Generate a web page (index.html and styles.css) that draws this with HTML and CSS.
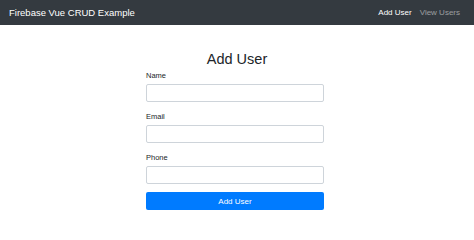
FILE: index.html
```html
<!DOCTYPE html>
<html>
<head>
<meta charset="utf-8">
<link rel="stylesheet" href="styles.css">
</head>
<body>
<nav class="navbar">
  <span class="brand">Firebase Vue CRUD Example</span>
  <div class="nav-links">
    <a class="nav-link active">Add User</a>
    <a class="nav-link">View Users</a>
  </div>
</nav>
<main class="page">
  <h1 class="title">Add User</h1>
  <form class="form">
    <div class="group">
      <label class="label">Name</label>
      <input class="input" type="text">
    </div>
    <div class="group">
      <label class="label">Email</label>
      <input class="input" type="text">
    </div>
    <div class="group">
      <label class="label">Phone</label>
      <input class="input" type="text">
    </div>
    <button class="btn" type="button">Add User</button>
  </form>
</main>
</body>
</html>
```

FILE: styles.css
```css
* { box-sizing: border-box; }
body {
  margin: 0;
  font-family: "Liberation Sans", Arial, sans-serif;
  color: #212529;
  background: #fff;
}
.navbar {
  height: 25px;
  background: #343a40;
  display: flex;
  align-items: center;
  justify-content: space-between;
  padding: 0 10px 0 9px;
}
.brand {
  color: #fff;
  font-size: 9.5px;
  line-height: 25px;
}
.nav-links {
  display: flex;
}
.nav-link {
  font-size: 8px;
  padding: 0 4px;
  color: rgba(255,255,255,0.5);
}
.nav-link.active { color: #fff; }
.page {
  display: flex;
  flex-direction: column;
  align-items: center;
  padding-top: 25px;
}
.title {
  margin: 0;
  font-weight: 400;
  font-size: 14.5px;
  line-height: 18px;
}
.form {
  width: 182px;
  padding-right: 4px;
  margin-top: 2px;
  display: flex;
  flex-direction: column;
}
.group {
  display: flex;
  flex-direction: column;
  margin-bottom: 9px;
}
.label {
  font-size: 7.5px;
  line-height: 12px;
  margin-bottom: 2px;
}
.input {
  height: 18px;
  border: 1px solid #ced4da;
  border-radius: 2px;
  margin: 0;
  padding: 0 4px;
}
.group:last-of-type { margin-bottom: 8px; }
.btn {
  height: 18px;
  border: 0;
  border-radius: 2px;
  background: #007bff;
  color: #fff;
  font-family: "Liberation Sans", Arial, sans-serif;
  font-size: 8px;
  padding: 0;
}
```
